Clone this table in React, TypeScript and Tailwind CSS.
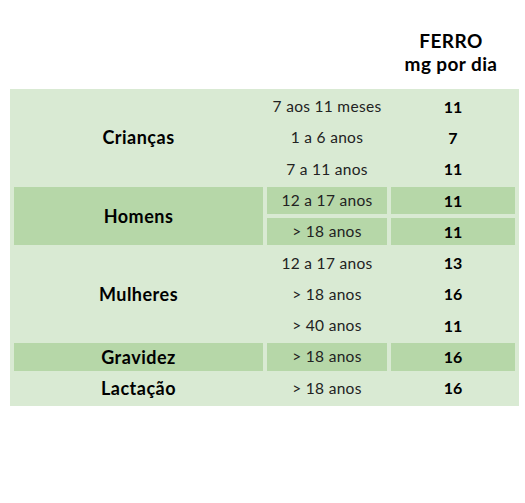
const rows = [
  { group: "Crianças", span: 3, age: "7 aos 11 meses", value: "11", dark: false },
  { age: "1 a 6 anos", value: "7", dark: false },
  { age: "7 a 11 anos", value: "11", dark: false },
  { group: "Homens", span: 2, age: "12 a 17 anos", value: "11", dark: true },
  { age: "> 18 anos", value: "11", dark: true },
  { group: "Mulheres", span: 3, age: "12 a 17 anos", value: "13", dark: false },
  { age: "> 18 anos", value: "16", dark: false },
  { age: "> 40 anos", value: "11", dark: false },
  { group: "Gravidez", span: 1, age: "> 18 anos", value: "16", dark: true },
  { group: "Lactação", span: 1, age: "> 18 anos", value: "16", dark: false },
];

export default function App() {
  return (
    <div className="w-[525px] h-[503px] bg-white text-black font-['Lato',sans-serif]">
      <div className="flex justify-end pt-[29px] pr-[10px]">
        <div className="w-[128px] text-center font-bold text-[19px] leading-[23px] tracking-[0.4px]">
          <div>FERRO</div>
          <div>mg por dia</div>
        </div>
      </div>
      <table className="ml-[10px] mt-[14px] w-[509px] border-separate border-spacing-1 bg-[#d9ead3] table-fixed">
        <colgroup>
          <col className="w-[249px]" />
          <col className="w-[120px]" />
          <col className="w-[124px]" />
        </colgroup>
        <tbody>
          {rows.map((r, i) => {
            const bg = r.dark ? "bg-[#b6d7a8]" : "";
            return (
              <tr key={i} className="h-[27.3px]">
                {r.group && (
                  <td rowSpan={r.span} className={`${bg} p-0 text-center align-middle font-bold text-[18px] tracking-[0.5px]`}>
                    {r.group}
                  </td>
                )}
                <td className={`${bg} p-0 text-center align-middle text-[15.5px] tracking-[0.3px] text-[#222]`}>{r.age}</td>
                <td className={`${bg} p-0 text-center align-middle font-bold text-[16px]`}>{r.value}</td>
              </tr>
            );
          })}
        </tbody>
      </table>
    </div>
  );
}
